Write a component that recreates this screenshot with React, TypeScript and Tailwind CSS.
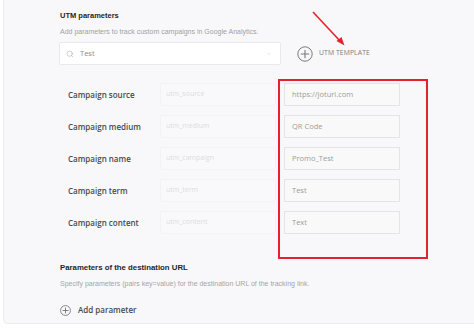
import { Search, ChevronDown } from "lucide-react";

const rows = [
  { label: "Campaign source", key: "utm_source", value: "https://joturl.com" },
  { label: "Campaign medium", key: "utm_medium", value: "QR Code" },
  { label: "Campaign name", key: "utm_campaign", value: "Promo_Test" },
  { label: "Campaign term", key: "utm_term", value: "Test" },
  { label: "Campaign content", key: "utm_content", value: "Text" },
];

const PlusCircle = ({ size, color }: { size: number; color: string }) => (
  <svg width={size} height={size} viewBox="0 0 16 16" fill="none">
    <circle cx="8" cy="8" r="7.2" stroke={color} strokeWidth="1" />
    <path d="M8 4.2v7.6M4.2 8h7.6" stroke={color} strokeWidth="1.1" strokeLinecap="round" />
  </svg>
);

export default function App() {
  return (
    <div className="relative w-[474px] h-[328px] overflow-hidden bg-white font-['Liberation_Sans',Arial,sans-serif]">
      <div className="ml-[3px] h-[324px] bg-[#f8f8fa] border-l border-b border-[#ebebef] rounded-bl-[5px] pl-[55px] pt-[10px]">
        <h2 className="text-[7.5px] leading-[12px] font-bold text-[#262626] pl-[1px]">UTM parameters</h2>
        <p className="mt-[5px] text-[7px] leading-[10px] text-[#a0a0a4] pl-[1px]">
          Add parameters to track custom campaigns in Google Analytics.
        </p>

        <div className="mt-[5px] flex items-center">
          <div className="w-[222px] h-[23px] bg-white border border-[#e9e9ec] rounded-[2px] flex items-center pl-[6px] pr-[8px]">
            <Search size={8} className="text-[#a8a8ac]" strokeWidth={1.6} />
            <span className="ml-[6px] text-[7.5px] text-[#8e8e92] font-['Open_Sans',sans-serif]">Test</span>
            <ChevronDown size={6} className="ml-auto text-[#d4d4d8]" />
          </div>
          <div className="ml-[16px] flex items-center">
            <PlusCircle size={16} color="#7a7a7e" />
            <span className="ml-[6px] text-[6.8px] tracking-[0.1px] text-[#7c7c80] font-['Open_Sans',sans-serif]">UTM TEMPLATE</span>
          </div>
        </div>

        <div className="mt-[18px] flex flex-col gap-[9px] font-['Open_Sans',sans-serif]">
          {rows.map((r) => (
            <div key={r.key} className="flex items-center h-[23px]">
              <div className="w-[101px] pl-[9px] text-[8px] font-semibold text-[#48484c]">{r.label}</div>
              <div className="w-[116px] h-[23px] bg-[#f9f9fb] border border-[#f3f3f5] flex items-center pl-[5px] text-[7px] text-[#dcdcdf]">
                {r.key}
              </div>
              <div className="ml-[8px] w-[116px] h-[23px] bg-[#f9f9f9] border border-[#e4e4e6] flex items-center pl-[7px] text-[7.5px] text-[#9c9c9f]">
                {r.value}
              </div>
            </div>
          ))}
        </div>

        <h2 className="mt-[28px] text-[7.8px] leading-[12px] font-bold text-[#262626] pl-[1px]">
          Parameters of the destination URL
        </h2>
        <p className="mt-[5px] text-[7px] leading-[10px] text-[#a4a4a8] pl-[1px]">
          Specify parameters (pairs key=value) for the destination URL of the tracking link.
        </p>
        <div className="mt-[14px] flex items-center h-[14px] pl-[1px]">
          <PlusCircle size={11} color="#5a5a5e" />
          <span className="ml-[7px] text-[8px] font-semibold text-[#48484c] font-['Open_Sans',sans-serif]">Add parameter</span>
        </div>
      </div>

      <div className="absolute left-[278px] top-[79px] w-[150px] h-[180px] border-2 border-[#e3232b]" />
      <svg className="absolute left-0 top-0" width="474" height="328">
        <line x1="313" y1="12" x2="341" y2="42" stroke="#e3232b" strokeWidth="1.6" />
        <path d="M344.5 45.5 L336.5 41 L341.5 37 Z" fill="#e3232b" />
      </svg>
    </div>
  );
}
